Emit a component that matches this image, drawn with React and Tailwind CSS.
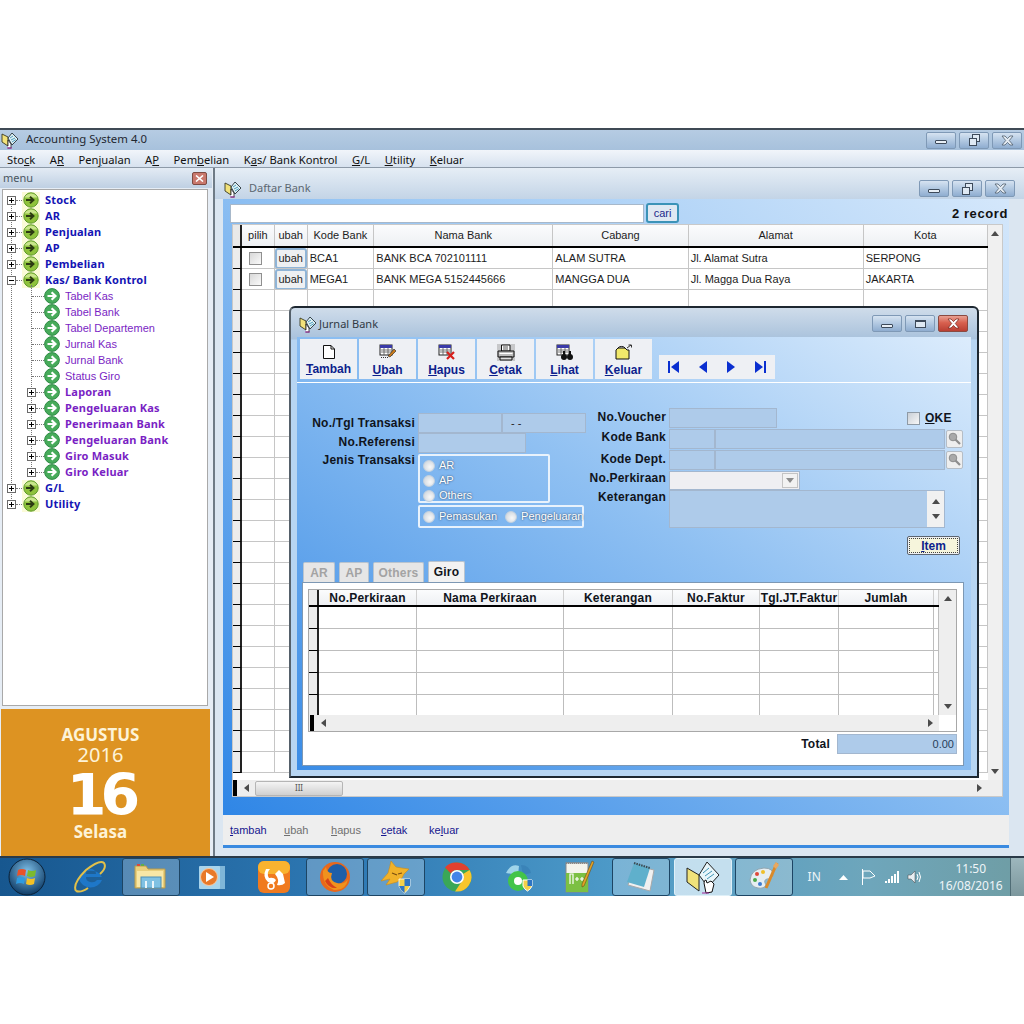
import React from 'react'

const labelBold = "font-['Liberation_Sans',sans-serif] font-bold text-[12px] tracking-[0.2px] text-[#10141c]"

function AppIcon({ size = 18 }) {
  return (
    <svg width={size} height={size} viewBox="0 0 18 18" className="shrink-0">
      <path d="M1 3 L7 6 L7 15 L1 11 Z" fill="#f2e27a" stroke="#3a3a20" strokeWidth="0.9" />
      <path d="M7 7 L11 2 L17 8 L11 14 Z" fill="#dff1f5" stroke="#27333a" strokeWidth="0.9" />
      <path d="M9 7 L12 5 M10 9 L14 7 M11 11 L15 8.5" stroke="#3d93b5" strokeWidth="0.9" />
      <path d="M7 15 L7 9 L10 13 L10 17 L7 17" fill="#fff" stroke="#222" strokeWidth="0.8" />
      <path d="M6 17 h5" stroke="#a02a9a" strokeWidth="1" />
    </svg>
  )
}

function RootBullet() {
  return (
    <svg width="18" height="16" viewBox="0 0 18 16" className="shrink-0">
      <rect x="0" y="0" width="18" height="16" fill="#fbfbd8" />
      <circle cx="9" cy="8" r="7.2" fill="#8fc23c" stroke="#5e9a2a" />
      <path d="M9 1.5 a6.5 4 0 0 1 6 4 h-12 a6.5 4 0 0 1 6 -4" fill="#c9e58b" />
      <path d="M4 8 h7 M8 4.8 L11.5 8 L8 11.2" stroke="#2c3a12" strokeWidth="1.9" fill="none" />
    </svg>
  )
}

function ChildBullet() {
  return (
    <svg width="16" height="16" viewBox="0 0 16 16" className="shrink-0">
      <circle cx="8" cy="8" r="7.4" fill="#47ab5a" stroke="#2f8c46" />
      <path d="M3.5 8 h7.5 M7.6 4.2 L11.5 8 L7.6 11.8" stroke="#fff" strokeWidth="2.2" fill="none" />
    </svg>
  )
}

function Expander({ open }) {
  return (
    <span className="relative z-10 flex h-[9px] w-[9px] shrink-0 items-center justify-center border border-[#6b6b6b] bg-white">
      <span className="absolute h-px w-[5px] bg-black" />
      {!open && <span className="absolute h-[5px] w-px bg-black" />}
    </span>
  )
}

function TreeRow({ level, label, expander, open, plain }) {
  if (level === 0) {
    return (
      <div className="flex h-4 items-center pl-[4px]">
        <Expander open={open} />
        <span className="h-0 w-[6px] border-t border-dotted border-[#777]" />
        <RootBullet />
        <span className="ml-[5px] font-['Noto_Sans',sans-serif] text-[11px] font-bold tracking-[0.2px] text-[#1414b4]">{label}</span>
      </div>
    )
  }
  return (
    <div className="flex h-4 items-center">
      {expander ? (
        <span className="flex w-[41px] items-center pl-[24px]">
          <Expander />
          <span className="h-0 w-[8px] border-t border-dotted border-[#777]" />
        </span>
      ) : (
        <span className="flex w-[41px] items-center pl-[29px]">
          <span className="h-0 w-[12px] border-t border-dotted border-[#777]" />
        </span>
      )}
      <ChildBullet />
      {plain ? (
        <span className="ml-[5px] font-['Liberation_Sans',sans-serif] text-[11px] text-[#7a1fc4]">{label}</span>
      ) : (
        <span className="ml-[5px] font-['Noto_Sans',sans-serif] text-[11px] font-bold tracking-[0.2px] text-[#7a1fc4]">{label}</span>
      )}
    </div>
  )
}

function CapBtn({ kind, w = 30, h = 17, danger }) {
  const skin = danger
    ? 'border-[#8a4a42] bg-[linear-gradient(to_bottom,#e8a093,#d8604f_45%,#b93f33)]'
    : 'border-[#7f99b6] bg-[linear-gradient(to_bottom,#d6e3f1,#b5cbe3_45%,#8fadd0)]'
  return (
    <span className={`flex items-center justify-center rounded-[2px] border ${skin}`} style={{ width: w, height: h }}>
      {kind === 'min' && <span className="mt-[4px] h-[4px] w-[12px] rounded-[1px] border border-[#3d4a5a] bg-[#e8eff6]" />}
      {kind === 'max' && <span className="h-[8px] w-[11px] border border-[#3d4a5a] border-t-2 bg-[#dfe9f3]" />}
      {kind === 'restore' && (
        <svg width="13" height="12" viewBox="0 0 13 12">
          <rect x="4.5" y="0.5" width="7" height="7" fill="#dfe9f3" stroke="#3d4a5a" />
          <rect x="1.5" y="4.5" width="7" height="7" fill="#dfe9f3" stroke="#3d4a5a" />
        </svg>
      )}
      {kind === 'close' && (
        <svg width="15" height="11" viewBox="0 0 15 11">
          <path d="M2 1 H5 L7.5 3.6 L10 1 H13 L9.3 5.5 L13 10 H10 L7.5 7.4 L5 10 H2 L5.7 5.5 Z" fill={danger ? '#fff' : '#e6edf4'} stroke={danger ? '#7d2d24' : '#50606f'} strokeWidth="0.8" />
        </svg>
      )}
    </span>
  )
}

function ArrowUp() {
  return <svg width="8" height="5" viewBox="0 0 8 5"><path d="M4 0 L8 5 H0 Z" fill="#4b4b4b" /></svg>
}
function ArrowDown() {
  return <svg width="8" height="5" viewBox="0 0 8 5"><path d="M0 0 H8 L4 5 Z" fill="#4b4b4b" /></svg>
}
function ArrowLeft() {
  return <svg width="5" height="8" viewBox="0 0 5 8"><path d="M5 0 V8 L0 4 Z" fill="#4b4b4b" /></svg>
}
function ArrowRight() {
  return <svg width="5" height="8" viewBox="0 0 5 8"><path d="M0 0 V8 L5 4 Z" fill="#4b4b4b" /></svg>
}

const bankCols = [
  { w: 33, label: 'pilih' },
  { w: 33, label: 'ubah' },
  { w: 67, label: 'Kode Bank' },
  { w: 180, label: 'Nama Bank' },
  { w: 136, label: 'Cabang' },
  { w: 176, label: 'Alamat' },
  { w: 125, label: 'Kota' },
]

const bankRows = [
  ['BCA1', 'BANK BCA 702101111', 'ALAM SUTRA', 'Jl. Alamat Sutra', 'SERPONG'],
  ['MEGA1', 'BANK MEGA 5152445666', 'MANGGA DUA', 'Jl. Magga Dua Raya', 'JAKARTA'],
]

function BankGrid() {
  const rows = Array.from({ length: 25 }, (_, i) => bankRows[i] || null)
  return (
    <div className="ml-[2px] mt-[2px] flex h-[573px] w-[771px] flex-col border border-[#c9c9c9] bg-white">
      <div className="flex min-h-0 flex-1">
        <div className="min-h-0 w-[757px] overflow-hidden">
          <div className="flex h-[23px] border-b-2 border-black">
            <div className="h-full w-[9px] border-r-2 border-[#222] bg-[#e9e9e9]" />
            {bankCols.map((c) => (
              <div key={c.label} style={{ width: c.w }} className="flex items-center justify-center border-r border-[#c6c6c6] bg-[linear-gradient(to_bottom,#fbfcfd,#eef0f3)] font-['Liberation_Sans',sans-serif] text-[11px] text-[#1c1c1c]">
                {c.label}
              </div>
            ))}
          </div>
          {rows.map((r, i) => (
            <div key={i} className="flex h-[21px]">
              <div className="h-full w-[9px] border-r-2 border-b border-r-[#222] border-b-black bg-[#ececec]" />
              {bankCols.map((c, j) => (
                <div key={c.label} style={{ width: c.w }} className="flex items-center overflow-hidden border-r border-b border-[#c6c6c6] pl-[2px] font-['Liberation_Sans',sans-serif] text-[11px] text-[#1c1c1c]">
                  {r && j === 0 && (
                    <span className="ml-[5px] h-[13px] w-[13px] border border-[#8f8f8f] bg-[linear-gradient(135deg,#d8d8d8,#fafafa)]" />
                  )}
                  {r && j === 1 && (
                    <span className="ml-[-2px] flex h-[21px] w-[33px] items-center justify-center rounded-[3px] border-2 border-[#8fb4d6] bg-[#eef0f2] text-[11px]">ubah</span>
                  )}
                  {r && j > 1 && r[j - 2]}
                </div>
              ))}
            </div>
          ))}
        </div>
        <div className="flex w-[14px] flex-col items-center justify-between bg-[#f0f0f0] py-[6px]">
          <ArrowUp />
          <ArrowDown />
        </div>
      </div>
      <div className="flex h-[16px] shrink-0 items-center bg-[#eeeeee]">
        <span className="h-full w-[4px] bg-black" />
        <span className="ml-[7px]"><ArrowLeft /></span>
        <span className="ml-[6px] flex h-[15px] w-[88px] items-center justify-center rounded-[2px] border border-[#b5b5b5] bg-[linear-gradient(to_bottom,#f4f4f4,#d0d0d0)] text-[8px] leading-none text-[#555]">III</span>
        <span className="ml-auto mr-[20px]"><ArrowRight /></span>
      </div>
    </div>
  )
}

function PageIcon() {
  return (
    <svg width="14" height="16" viewBox="0 0 14 16">
      <path d="M1.5 1.5 H9 L12.5 5 V14.5 H1.5 Z" fill="#fff" stroke="#111" />
      <path d="M9 1.5 V5 H12.5" fill="none" stroke="#111" />
    </svg>
  )
}
function GridIcon({ children }) {
  return (
    <svg width="18" height="17" viewBox="0 0 18 17">
      <rect x="1" y="1" width="12" height="10" fill="#fff" stroke="#222" />
      <rect x="1" y="1" width="12" height="3" fill="#3a3aa8" />
      <path d="M2 6 h10 M2 8 h10 M5 4 v7 M9 4 v7" stroke="#555" strokeWidth="0.8" />
      {children}
    </svg>
  )
}
function PrinterIcon() {
  return (
    <svg width="18" height="17" viewBox="0 0 18 17">
      <rect x="0" y="0" width="18" height="17" fill="#a8a8a8" opacity="0.55" />
      <path d="M4.5 1 H13 V7 H4.5 Z" fill="#fff" stroke="#111" />
      <path d="M6 3 h5 M6 5 h5" stroke="#555" />
      <path d="M1 7 H17 V13 H1 Z" fill="#bdbdbd" stroke="#111" />
      <path d="M3 13 H15 V16 H3 Z" fill="#ddd" stroke="#111" />
      <path d="M2.5 9.5 h13" stroke="#fff" />
    </svg>
  )
}
function FolderOutIcon() {
  return (
    <svg width="18" height="17" viewBox="0 0 18 17">
      <path d="M1 6 L3 4 H10 L12 6 H14 V15 H1 Z" fill="#f1e96b" stroke="#111" />
      <path d="M3 4 a4 3 0 0 1 7 0" fill="none" stroke="#111" />
      <path d="M12 4 L16 1 M13.5 1 H16.5 V3.5" fill="none" stroke="#333" />
    </svg>
  )
}

const tools = [
  { key: 'T', rest: 'ambah', icon: <PageIcon /> },
  { key: 'U', rest: 'bah', icon: <GridIcon><path d="M9 12 L15 5 L17 7 L11 13 Z" fill="#c77a1c" stroke="#222" strokeWidth="0.6" /><path d="M2 13.5 h7" stroke="#333" strokeDasharray="1 1" /></GridIcon> },
  { key: 'H', rest: 'apus', icon: <GridIcon><path d="M9 8 L16 15 M16 8 L9 15" stroke="#d6201c" strokeWidth="2.2" /></GridIcon> },
  { key: 'C', rest: 'etak', icon: <PrinterIcon /> },
  { key: 'L', rest: 'ihat', icon: <GridIcon><circle cx="8" cy="13" r="3" fill="#111" /><circle cx="14" cy="13" r="3" fill="#111" /><path d="M7 7 h2 v5 h-2 Z M13 7 h2 v5 h-2 Z" fill="#111" /></GridIcon> },
  { key: 'K', rest: 'eluar', icon: <FolderOutIcon /> },
]

function Toolbar() {
  return (
    <div className="flex h-[46px] items-end gap-[2px] border-b border-white pb-[3px] pl-[3px]">
      {tools.map((t) => (
        <div key={t.key} className="flex h-[40px] w-[57px] flex-col items-center justify-between bg-[#eef0f4] pt-[5px] pb-[3px]">
          <span className="flex h-[17px] items-center">{t.icon}</span>
          <span className="font-['Liberation_Sans',sans-serif] text-[12px] font-bold text-[#0d1f8c]">
            <span className="underline">{t.key}</span>{t.rest}
          </span>
        </div>
      ))}
      <div className="ml-[5px] flex h-[24px] w-[116px] items-center justify-between bg-[#eef0f4] px-[8px]">
        <svg width="12" height="14" viewBox="0 0 12 14"><path d="M1 1 h2 v12 h-2 Z M12 1 V13 L4 7 Z" fill="#0a2fd0" /></svg>
        <svg width="9" height="14" viewBox="0 0 9 14" className="ml-[10px]"><path d="M9 1 V13 L1 7 Z" fill="#0a2fd0" /></svg>
        <svg width="9" height="14" viewBox="0 0 9 14" className="ml-[10px]"><path d="M0 1 V13 L8 7 Z" fill="#0a2fd0" /></svg>
        <svg width="12" height="14" viewBox="0 0 12 14" className="ml-[10px]"><path d="M0 1 V13 L8 7 Z M9 1 h2 v12 h-2 Z" fill="#0a2fd0" /></svg>
      </div>
    </div>
  )
}

function Field({ w, h = 20, className = '', children }) {
  return (
    <div style={{ width: w, height: h }} className={`shrink-0 border border-[#a3b7cf] bg-[#aecbea] font-['Liberation_Sans',sans-serif] text-[11px] text-[#222] ${className}`}>
      {children}
    </div>
  )
}

function FormLabel({ w, className = '', children }) {
  return <div style={{ width: w }} className={`${labelBold} shrink-0 text-right leading-[15px] ${className}`}>{children}</div>
}

function Radio({ label, className = '' }) {
  return (
    <div className={`flex items-center gap-[4px] ${className}`}>
      <span className="h-[12px] w-[12px] rounded-full border border-[#c4d2e0] bg-[radial-gradient(circle_at_60%_60%,#f8f8f8,#c8d0d8)]" />
      <span className="font-['Liberation_Sans',sans-serif] text-[11px] leading-[15px] text-white [text-shadow:0_0_2px_#1c2f48]">{label}</span>
    </div>
  )
}

function Lookup() {
  return (
    <span className="ml-[-2px] flex h-[18px] w-[17px] items-center justify-center rounded-[2px] border border-[#b5bdc6] bg-[#eeeeee]">
      <svg width="13" height="13" viewBox="0 0 13 13">
        <circle cx="5" cy="5" r="3.8" fill="#a9a9a9" stroke="#8d8d8d" />
        <path d="M7.5 7.5 L12 12" stroke="#8d8d8d" strokeWidth="2.2" />
      </svg>
    </span>
  )
}

function JurnalForm() {
  return (
    <div className="flex h-[179px]">
      <div className="w-[289px] pl-[1px] pt-[30px]">
        <div className="flex h-[20px] items-center gap-[3px]">
          <FormLabel w={117}>No./Tgl Transaksi</FormLabel>
          <Field w={84} />
          <Field w={84} className="ml-[-3px] flex items-center pl-[8px] leading-none">- -</Field>
        </div>
        <div className="flex h-[20px] items-center gap-[3px]">
          <FormLabel w={117} className="mt-[-1px]">No.Referensi</FormLabel>
          <Field w={108} />
        </div>
        <div className="mt-[1px] flex items-start gap-[3px]">
          <FormLabel w={117} className="mt-[-1px]">Jenis Transaksi</FormLabel>
          <div className="flex h-[49px] w-[132px] flex-col justify-center rounded-[2px] border-2 border-[#e8f2fc] pl-[3px] pt-[4px]">
            <Radio label="AR" />
            <Radio label="AP" />
            <Radio label="Others" />
          </div>
        </div>
        <div className="ml-[120px] mt-[2px] flex h-[23px] w-[166px] items-center gap-[8px] rounded-[2px] border-2 border-[#e8f2fc] pl-[3px]">
          <Radio label="Pemasukan" />
          <Radio label="Pengeluaran" />
        </div>
      </div>
      <div className="flex-1 pt-[25px]">
        <div className="flex h-[20px] items-center gap-[3px]">
          <FormLabel w={80} className="mt-[-2px]">No.Voucher</FormLabel>
          <Field w={108} />
          <span className="ml-[127px] h-[13px] w-[13px] border border-[#8e9aa6] bg-[linear-gradient(135deg,#c9cfd6,#f7f7f7)]" />
          <span className={`${labelBold} ml-[2px]`}><span className="underline">O</span>KE</span>
        </div>
        <div className="flex h-[21px] items-center gap-[3px]">
          <FormLabel w={80} className="mt-[-2px]">Kode Bank</FormLabel>
          <Field w={46} />
          <Field w={230} className="ml-[-3px]" />
          <Lookup />
        </div>
        <div className="flex h-[21px] items-center gap-[3px]">
          <FormLabel w={80}>Kode Dept.</FormLabel>
          <Field w={46} />
          <Field w={230} className="ml-[-3px]" />
          <Lookup />
        </div>
        <div className="flex h-[20px] items-center gap-[3px]">
          <FormLabel w={80} className="mt-[-4px]">No.Perkiraan</FormLabel>
          <div className="flex h-[19px] w-[131px] items-center justify-end border border-[#a3b7cf] bg-[#efeff2] pr-[1px]">
            <span className="flex h-[15px] w-[16px] items-center justify-center border border-[#c4c4c4] bg-[#f2f2f2]">
              <svg width="8" height="5" viewBox="0 0 8 5"><path d="M0 0 H8 L4 5 Z" fill="#8c8c8c" /></svg>
            </span>
          </div>
        </div>
        <div className="flex items-start gap-[3px]">
          <FormLabel w={80}>Keterangan</FormLabel>
          <div className="flex h-[38px] w-[276px] justify-end border border-[#a3b7cf] bg-[#aecbea]">
            <div className="flex w-[17px] flex-col items-center justify-between bg-[#f1f1f1] py-[8px]">
              <ArrowUp />
              <ArrowDown />
            </div>
          </div>
        </div>
        <div className="ml-[321px] mt-[8px] flex h-[19px] w-[53px] items-center justify-center rounded-[2px] border border-[#5c6570] bg-[#eef0f3] p-[1px]">
          <span className="flex h-full w-full items-center justify-center border border-dotted border-[#444] bg-[#f6f5dc] font-['Liberation_Sans',sans-serif] text-[12px] font-bold text-[#0d1f8c]">
            <span className="underline">I</span>tem
          </span>
        </div>
      </div>
    </div>
  )
}

const itemCols = [
  { w: 98, label: 'No.Perkiraan' },
  { w: 147, label: 'Nama Perkiraan' },
  { w: 109, label: 'Keterangan' },
  { w: 87, label: 'No.Faktur' },
  { w: 79, label: 'Tgl.JT.Faktur' },
  { w: 95, label: 'Jumlah' },
  { w: 5, label: '' },
]

const tabs = [
  { label: 'AR', w: 32 },
  { label: 'AP', w: 30 },
  { label: 'Others', w: 51 },
]

function ItemGrid() {
  return (
    <div className="flex h-[143px] w-[649px] flex-col border border-[#a8a8a8] bg-white">
      <div className="flex h-[125px]">
        <div className="w-[630px] overflow-hidden">
          <div className="flex h-[17px] border-b-2 border-black">
            <div className="h-full w-[10px] border-r-2 border-[#222] bg-[#ececec]" />
            {itemCols.map((c) => (
              <div key={c.w + c.label} style={{ width: c.w }} className={`${labelBold} flex items-center justify-center border-r border-[#d0d0d0] bg-[linear-gradient(to_bottom,#fbfcfd,#eef0f3)]`}>
                {c.label}
              </div>
            ))}
          </div>
          {[0, 1, 2, 3, 4].map((i) => (
            <div key={i} className="flex h-[22px]">
              <div className="h-full w-[10px] border-r-2 border-b border-r-[#222] border-b-black bg-[#ececec]" />
              {itemCols.map((c) => (
                <div key={c.w + c.label} style={{ width: c.w }} className="border-r border-b border-[#bdbdbd]" />
              ))}
            </div>
          ))}
        </div>
        <div className="ml-auto flex w-[17px] flex-col items-center justify-between bg-[#eeeeee] py-[6px]">
          <ArrowUp />
          <ArrowDown />
        </div>
      </div>
      <div className="flex h-[16px] items-center">
        <div className="flex h-full w-[630px] items-center bg-[#eeeeee]">
          <span className="ml-[1px] h-full w-[4px] bg-black" />
          <span className="ml-[7px]"><ArrowLeft /></span>
          <span className="ml-auto mr-[6px]"><ArrowRight /></span>
        </div>
      </div>
    </div>
  )
}

function JurnalWindow() {
  return (
    <div className="absolute left-[74px] top-[138px] h-[472px] w-[690px] rounded-t-[6px] border-2 border-[#1d2730] border-l-[#55606a] bg-[linear-gradient(to_bottom,#cfdcea,#a9c2dc_31px,#b7d5f2_32px)] px-[6px] pb-[7px]">
      <div className="flex h-[29px] items-center pl-[2px] pr-[3px] pt-[2px]">
        <AppIcon />
        <span className="ml-[2px] mt-[2px] font-['Noto_Sans',sans-serif] text-[11px] text-[#303a44]">Jurnal Bank</span>
        <span className="ml-auto flex gap-[3px]">
          <CapBtn kind="min" />
          <CapBtn kind="max" />
          <CapBtn kind="close" danger />
        </span>
      </div>
      <div className="h-[433px] bg-[linear-gradient(to_top_right,#3a8ce6,#8fc0f2_55%,#dcecfc)]">
        <Toolbar />
        <JurnalForm />
        <div className="flex h-[20px] items-end gap-[4px] pl-[6px]">
          {tabs.map((t) => (
            <span key={t.label} style={{ width: t.w }} className={`${labelBold} flex h-[20px] items-center justify-center rounded-t-[2px] border border-b-0 border-[#b8c4d0] bg-[#e6e6e6] text-[#a3a3a3]`}>{t.label}</span>
          ))}
          <span className={`${labelBold} flex h-[21px] w-[37px] items-center justify-center rounded-t-[2px] border border-b-0 border-[#b8c4d0] bg-[#f2f2f2]`}>Giro</span>
        </div>
        <div className="ml-[5px] h-[184px] w-[662px] border border-[#7d98b4] bg-white pl-[5px] pt-[6px]">
          <ItemGrid />
          <div className="mt-[2px] flex h-[20px] w-[649px] items-center justify-end gap-[7px]">
            <span className={labelBold}>Total</span>
            <Field w={120} className="flex items-center justify-end pr-[2px] text-[#27405a]">0.00</Field>
          </div>
        </div>
      </div>
    </div>
  )
}

function Sidebar() {
  const items = [
    { level: 0, label: 'Stock' },
    { level: 0, label: 'AR' },
    { level: 0, label: 'Penjualan' },
    { level: 0, label: 'AP' },
    { level: 0, label: 'Pembelian' },
    { level: 0, label: 'Kas/ Bank Kontrol', open: true },
    { level: 1, label: 'Tabel Kas', plain: true },
    { level: 1, label: 'Tabel Bank', plain: true },
    { level: 1, label: 'Tabel Departemen', plain: true },
    { level: 1, label: 'Jurnal Kas', plain: true },
    { level: 1, label: 'Jurnal Bank', plain: true },
    { level: 1, label: 'Status Giro', plain: true },
    { level: 1, label: 'Laporan', expander: true },
    { level: 1, label: 'Pengeluaran Kas', expander: true },
    { level: 1, label: 'Penerimaan Bank', expander: true },
    { level: 1, label: 'Pengeluaran Bank', expander: true },
    { level: 1, label: 'Giro Masuk', expander: true },
    { level: 1, label: 'Giro Keluar', expander: true },
    { level: 0, label: 'G/L' },
    { level: 0, label: 'Utility' },
  ]
  return (
    <div className="flex w-[212px] shrink-0 flex-col bg-[#e6edf5]">
      <div className="flex h-[20px] items-center justify-between bg-[linear-gradient(to_bottom,#e3ebf4,#bfd0e3)] pl-[3px] pr-[5px]">
        <span className="font-['Noto_Sans',sans-serif] text-[11px] text-[#4a5560]">menu</span>
        <span className="flex h-[13px] w-[15px] items-center justify-center rounded-[2px] border border-[#7d4a42] bg-[#c9786d]">
          <svg width="9" height="7" viewBox="0 0 9 7"><path d="M1 0.5 L8 6.5 M8 0.5 L1 6.5" stroke="#fff" strokeWidth="1.6" /></svg>
        </span>
      </div>
      <div className="relative ml-[2px] mt-[1px] h-[517px] w-[206px] border border-[#a9a9a9] bg-white pt-[2px]">
        <span className="absolute left-[8px] top-[13px] h-[304px] border-l border-dotted border-[#777]" />
        <span className="absolute left-[28px] top-[95px] h-[186px] border-l border-dotted border-[#777]" />
        {items.map((it) => (
          <TreeRow key={it.label} {...it} />
        ))}
      </div>
      <div className="ml-[1px] mt-[3px] flex h-[147px] w-[209px] flex-col items-center bg-[#dd9322] pr-[10px] pt-[16px] font-['Noto_Sans',sans-serif] text-[#fdf3d8]">
        <span className="text-[17px] font-bold leading-[19px]">AGUSTUS</span>
        <span className="text-[20px] leading-[22px]">2016</span>
        <span className="mt-[6px] font-['DejaVu_Sans',sans-serif] text-[57px] font-bold leading-[46px] tracking-[-6px] text-white">16</span>
        <span className="mt-[4px] text-[17px] font-bold leading-[20px]">Selasa</span>
      </div>
    </div>
  )
}

function BankWindow() {
  return (
    <div className="relative ml-[1px] flex min-w-0 flex-1 flex-col border-l-2 border-[#6f7b86] bg-[#dbe6f1]">
      <div className="flex h-[31px] items-center bg-[linear-gradient(to_bottom,#e6eef6,#c3d4e6)] pl-[9px] pr-[9px] pt-[10px]">
        <AppIcon />
        <span className="ml-[7px] font-['Noto_Sans',sans-serif] text-[11px] text-[#5b6670]">Daftar Bank</span>
        <span className="ml-auto flex gap-[3px]">
          <CapBtn kind="min" />
          <CapBtn kind="restore" />
          <CapBtn kind="close" />
        </span>
      </div>
      <div className="ml-[8px] h-[616px] w-[786px] bg-[linear-gradient(to_top_right,#2f86e6,#9cc8f4_60%,#d4e7fb)] pl-[7px] pt-[5px]">
        <div className="flex h-[18px] items-start">
          <span className="h-[19px] w-[414px] border border-[#a7b8ca] bg-white" />
          <span className="ml-[2px] mt-[-1px] flex h-[20px] w-[33px] items-center justify-center rounded-[3px] border-2 border-[#3b93b8] bg-[#dfe9f3] font-['Liberation_Sans',sans-serif] text-[11px] text-[#1d2a8a]">cari</span>
          <span className="ml-auto mr-[1px] font-['Liberation_Sans',sans-serif] text-[13px] font-bold leading-[20px] tracking-[0.6px] text-[#111]">2 record</span>
        </div>
        <BankGrid />
      </div>
      <div className="ml-[8px] flex h-[30px] w-[786px] items-center bg-[#eeeeee] pl-[7px] font-['Liberation_Sans',sans-serif] text-[11px]">
        <span className="w-[54px] text-[#17178f]"><span className="underline">t</span>ambah</span>
        <span className="w-[47px] text-[#707070]"><span className="underline">u</span>bah</span>
        <span className="w-[50px] text-[#707070]"><span className="underline">h</span>apus</span>
        <span className="w-[48px] text-[#17178f]"><span className="underline">c</span>etak</span>
        <span className="text-[#17178f]">ke<span className="underline">l</span>uar</span>
      </div>
      <div className="ml-[8px] h-[3px] w-[786px] bg-[#3a8ae0]" />
      <JurnalWindow />
    </div>
  )
}

function WinOrb() {
  return (
    <svg width="38" height="38" viewBox="0 0 38 38">
      <defs>
        <radialGradient id="orb" cx="50%" cy="35%" r="65%">
          <stop offset="0" stopColor="#7fc0e8" />
          <stop offset="1" stopColor="#0e3b66" />
        </radialGradient>
      </defs>
      <circle cx="19" cy="19" r="18" fill="url(#orb)" stroke="#0b2238" />
      <path d="M10 12 Q14 10 18 12 L17 18 Q13 16 9 18 Z" fill="#e8522a" />
      <path d="M20 12 Q24 14 28 12 L27 18 Q23 20 19 18 Z" fill="#7cba2f" />
      <path d="M9 20 Q13 18 17 20 L16 26 Q12 24 8 26 Z" fill="#2f9be0" />
      <path d="M19 20 Q23 22 27 20 L26 26 Q22 28 18 26 Z" fill="#f5c125" />
    </svg>
  )
}
function IeIcon() {
  return (
    <svg width="34" height="34" viewBox="0 0 34 34">
      <path d="M6 19 a12 10 0 0 1 23 -2 H13 a6 5 0 0 0 11 3 h5 a12 11 0 0 1 -23 -1 Z M13 14 h10 a5 5 0 0 0 -10 0" fill="#1e77c8" fillRule="evenodd" />
      <path d="M3 31 Q-1 24 13 10 Q27 -1 31 3 Q34 8 27 14" fill="none" stroke="#e2c04a" strokeWidth="2" />
      <path d="M3 31 Q8 33 15 28" fill="none" stroke="#e2c04a" strokeWidth="2" />
    </svg>
  )
}
function FolderIcon() {
  return (
    <svg width="34" height="30" viewBox="0 0 34 30">
      <path d="M1 4 H12 L14 7 H31 V26 H1 Z" fill="#e9cf7c" stroke="#b89a4a" />
      <rect x="3" y="2" width="3" height="2" fill="#d9483b" />
      <rect x="7" y="2" width="3" height="2" fill="#5fae4a" />
      <path d="M3 9 H29 V25 H3 Z" fill="#f8e7a6" />
      <rect x="7" y="15" width="20" height="11" fill="#7fc1e3" stroke="#4f8fb5" />
      <rect x="11" y="19" width="2" height="7" fill="#e9f5fb" />
      <rect x="18" y="19" width="2" height="7" fill="#e9f5fb" />
    </svg>
  )
}
function WmpIcon() {
  return (
    <svg width="28" height="28" viewBox="0 0 28 28">
      <rect x="5" y="3" width="22" height="23" fill="#7fb6d8" />
      <rect x="1" y="3" width="21" height="23" rx="1" fill="#a8d4ec" />
      <circle cx="11" cy="14" r="8.5" fill="#e8792a" stroke="#f6c9a2" />
      <path d="M8 9 L16 14 L8 19 Z" fill="#fff" />
    </svg>
  )
}
function UcIcon() {
  return (
    <svg width="32" height="32" viewBox="0 0 32 32">
      <rect width="32" height="32" rx="6" fill="#f07a1f" />
      <rect width="32" height="13" rx="6" fill="#f9b32f" />
      <path d="M8 8 Q4 16 10 21 Q16 24 18 19 Q16 16 11 17 Q8 12 12 8 Z" fill="#fff" />
      <path d="M17 13 L21 9 L25 13 L27 22 Q24 25 19 24 Q22 19 17 13 Z" fill="#fff" />
      <circle cx="13" cy="25" r="3" fill="none" stroke="#fff" strokeWidth="1.5" />
    </svg>
  )
}
function FirefoxIcon() {
  return (
    <svg width="32" height="32" viewBox="0 0 32 32">
      <circle cx="16" cy="16" r="15" fill="#e8681c" />
      <circle cx="18" cy="13" r="10" fill="#1f5fa8" />
      <path d="M4 10 Q3 24 15 29 Q27 30 29 18 Q25 24 18 22 Q10 20 13 12 Q8 12 7 6 Z" fill="#f0921d" />
      <path d="M6 20 Q10 28 18 27 Q12 24 9 17 Z" fill="#d8411a" />
    </svg>
  )
}
function FoxIcon() {
  return (
    <svg width="34" height="34" viewBox="0 0 34 34">
      <path d="M12 1 L17 7 Q22 8 30 9 L25 14 Q23 20 18 22 L7 25 L11 19 L2 21 L9 13 Q11 6 12 1 Z" fill="#f1b22a" stroke="#c98c1a" strokeWidth="0.6" />
      <path d="M13 13 L18 15 M19 14 L23 13" stroke="#7a4d10" strokeWidth="1.2" />
      <path d="M20 19 h11 v7 q-1.500 4 -5.500 7 q-4 -3 -5.500 -7 Z" fill="#f4d04a" stroke="#fff" strokeWidth="0.8" />
      <path d="M25.500 19 h5.500 v7 h-5.500 Z M20 26 h5.500 v7 q-4 -3 -5.500 -7 Z" fill="#2d74c4" />
    </svg>
  )
}
function ChromeIcon() {
  return (
    <svg width="30" height="30" viewBox="0 0 30 30">
      <circle cx="15" cy="15" r="14.5" fill="#3aa757" />
      <path d="M15 .5 A14.5 14.5 0 0 1 27.6 8 H15 A7 7 0 0 0 8.8 11.6 L3 5.5 A14.5 14.5 0 0 1 15 .5 Z" fill="#e2402f" />
      <path d="M27.6 8 A14.5 14.5 0 0 1 13 29.4 L20 19 A7 7 0 0 0 21 12 Z" fill="#f8c52c" />
      <circle cx="15" cy="15" r="7" fill="#fff" />
      <circle cx="15" cy="15" r="5.4" fill="#4285e8" />
    </svg>
  )
}
function ShieldBallIcon() {
  return (
    <svg width="32" height="32" viewBox="0 0 32 32">
      <path d="M3 12 Q8 2 16 5 L15 14 Z" fill="#9fd4ea" />
      <path d="M18 4 Q26 4 28 12 L20 14 Z" fill="#3a83b8" />
      <circle cx="15" cy="20" r="10" fill="#43c44a" />
      <circle cx="15" cy="20" r="4" fill="#fff" />
      <path d="M20 19 h9 v6 q-1 3 -4.500 5 q-3.500 -2 -4.500 -5 Z" fill="#f4d04a" stroke="#fff" />
      <path d="M24.500 19 h4.500 v6 h-4.500 Z" fill="#2d74c4" />
    </svg>
  )
}
function NotepadPlusIcon() {
  return (
    <svg width="32" height="34" viewBox="0 0 32 34">
      <rect x="2" y="3" width="22" height="29" fill="#f4f4ec" stroke="#888" />
      <rect x="2" y="13" width="22" height="19" fill="#7cc043" />
      <path d="M2 3 h22" stroke="#888" strokeWidth="2" strokeDasharray="1 1" />
      <path d="M6 24 V14 h3 V24 M11 19 h4 M13 17 v4 M16 19 h4 M18 17 v4" stroke="#fff" strokeWidth="1.2" fill="none" />
      <path d="M30 2 L20 26 L18 27 L18 24 L28 1 Z" fill="#e0a126" stroke="#5d3f10" strokeWidth="0.5" />
    </svg>
  )
}
function NotepadIcon() {
  return (
    <svg width="34" height="32" viewBox="0 0 34 32">
      <path d="M10 4 L30 9 L26 30 L4 24 Z" fill="#f0f0f0" stroke="#a9a9a9" />
      <path d="M10 2 L26 7 L20 26 L3 21 Z" fill="#5fb0cc" />
      <path d="M10 2 L26 7" stroke="#3b4a52" strokeWidth="2" strokeDasharray="1.500 1" />
    </svg>
  )
}
function AccountIcon() {
  return (
    <svg width="34" height="34" viewBox="0 0 34 34">
      <path d="M1 8 L13 15 L13 31 L1 22 Z" fill="#f0e27a" stroke="#222" />
      <path d="M13 15 L21 2 L33 15 L22 27 Z" fill="#e8f6fa" stroke="#222" />
      <path d="M17 13 L23 8 M19 16 L26 11 M21 19 L28 14" stroke="#3d93b5" />
      <path d="M20 33 L18 23 Q18 20 20 20 L21 23 L25 21 L28 24 L26 32 Z" fill="#fff" stroke="#111" />
      <path d="M16 33 h7" stroke="#a02a9a" />
    </svg>
  )
}
function PaintIcon() {
  return (
    <svg width="32" height="32" viewBox="0 0 32 32">
      <path d="M2 19 Q3 8 16 7 Q26 7 25 15 Q23 19 19 18 Q15 19 18 24 Q16 28 10 27 Q3 26 2 19 Z" fill="#e6eef2" stroke="#93a6b0" />
      <circle cx="9" cy="13" r="2" fill="#e0483a" />
      <circle cx="15" cy="11" r="2" fill="#f0c02a" />
      <circle cx="7" cy="19" r="2" fill="#4ca84a" />
      <circle cx="12" cy="23" r="2" fill="#3c7bd0" />
      <path d="M29 2 L18 27" stroke="#d98a2a" strokeWidth="3" />
      <path d="M28 1 L31 4 L28 8 L25 5 Z" fill="#e8a860" />
    </svg>
  )
}

const dock = [
  { icon: <IeIcon /> },
  { icon: <FolderIcon />, on: true },
  { icon: <WmpIcon /> },
  { icon: <UcIcon /> },
  { icon: <FirefoxIcon />, on: true },
  { icon: <FoxIcon />, on: true },
  { icon: <ChromeIcon /> },
  { icon: <ShieldBallIcon /> },
  { icon: <NotepadPlusIcon /> },
  { icon: <NotepadIcon />, on: true },
  { icon: <AccountIcon />, on: true, active: true },
  { icon: <PaintIcon />, on: true },
]

function Taskbar() {
  return (
    <div className="flex h-[40px] shrink-0 items-stretch border-t-2 border-[#2a3a48] bg-[linear-gradient(to_right,#17578f,#2f7ab5_35%,#4d9ac8_60%,#6ea6bb_85%,#6f9da4)]">
      <div className="flex w-[59px] shrink-0 items-center justify-center pr-[5px]"><WinOrb /></div>
      {dock.map((d, i) => (
        <div key={i} className="flex w-[61.3px] shrink-0 items-center justify-center">
          <span className={`flex h-[38px] w-[58px] items-center justify-center rounded-[3px] ${d.active ? 'border border-[#dff0f8] bg-[#cfe6f3]/90' : d.on ? 'border border-[#1d4564] bg-white/25' : ''}`}>
            {d.icon}
          </span>
        </div>
      ))}
      <div className="flex min-w-0 flex-1 items-center font-['Noto_Sans',sans-serif] text-[12px] text-[#eef5f8]">
        <span className="ml-[13px]">IN</span>
        <svg width="9" height="5" viewBox="0 0 9 5" className="ml-[18px]"><path d="M4.500 0 L9 5 H0 Z" fill="#fff" /></svg>
        <svg width="15" height="16" viewBox="0 0 15 16" className="ml-[13px]"><path d="M1.500 0 V16" stroke="#fff" /><path d="M2 2 H9 L14 7 L9 9 H2 Z" fill="none" stroke="#fff" /></svg>
        <svg width="15" height="12" viewBox="0 0 15 12" className="ml-[8px]"><path d="M1 10 h2 v2 h-2 Z M4 8 h2 v4 h-2 Z M7 5 h2 v7 h-2 Z M10 3 h2 v9 h-2 Z M13 0 h2 v12 h-2 Z" fill="#fff" /></svg>
        <svg width="16" height="14" viewBox="0 0 16 14" className="ml-[8px]"><path d="M1 5 H4 L8 1 V13 L4 9 H1 Z" fill="#e8eef2" stroke="#444" strokeWidth="0.5" /><path d="M10 4 Q12 7 10 10 M12 2 Q15 7 12 12" fill="none" stroke="#fff" /></svg>
        <div className="ml-[14px] flex w-[68px] flex-col items-center text-[12px] leading-[17px]">
          <span>11:50</span>
          <span>16/08/2016</span>
        </div>
        <span className="ml-auto h-full w-[14px] border-l border-[#4f6c75] bg-[linear-gradient(to_bottom,#9db7bd,#7c979d)]" />
      </div>
    </div>
  )
}

function Menu({ text, u, className = '' }) {
  const i = text.indexOf(u)
  return (
    <span className={className}>
      {text.slice(0, i)}<span className="underline">{u}</span>{text.slice(i + 1)}
    </span>
  )
}

export default function App() {
  return (
    <div className="flex h-[1024px] w-[1024px] flex-col overflow-hidden bg-white pt-[128px]">
      <div className="flex h-[768px] flex-col">
        <div className="flex h-[22px] shrink-0 items-center border-t-2 border-[#3f4a55] bg-[linear-gradient(to_bottom,#b6cce3,#a7c1dc)] pr-[2px]">
          <span className="ml-[1px]"><AppIcon /></span>
          <span className="ml-[7px] mt-[-2px] font-['Noto_Sans',sans-serif] text-[11.4px] text-[#1f2730]">Accounting System 4.0</span>
          <span className="ml-auto flex gap-[3px]">
            <CapBtn kind="min" />
            <CapBtn kind="restore" />
            <CapBtn kind="close" />
          </span>
        </div>
        <div className="flex h-[18px] shrink-0 items-center border-b border-[#8d9aa8] bg-[linear-gradient(to_bottom,#f1f5fa,#d7e2ef)] pl-[7px] pt-[3px] font-['Noto_Sans',sans-serif] text-[11.2px] text-[#111]">
          <Menu text="Stock" u="c" />
          <Menu text="AR" u="R" className="ml-[14.5px]" />
          <Menu text="Penjualan" u="j" className="ml-[14.5px]" />
          <Menu text="AP" u="P" className="ml-[14.5px]" />
          <Menu text="Pembelian" u="b" className="ml-[14.5px]" />
          <Menu text="Kas/ Bank Kontrol" u="a" className="ml-[14.5px]" />
          <Menu text="G/L" u="G" className="ml-[14.5px]" />
          <Menu text="Utility" u="U" className="ml-[14.5px]" />
          <Menu text="Keluar" u="K" className="ml-[14.5px]" />
        </div>
        <div className="flex min-h-0 flex-1 bg-[#e6edf5]">
          <Sidebar />
          <BankWindow />
        </div>
        <Taskbar />
      </div>
    </div>
  )
}
